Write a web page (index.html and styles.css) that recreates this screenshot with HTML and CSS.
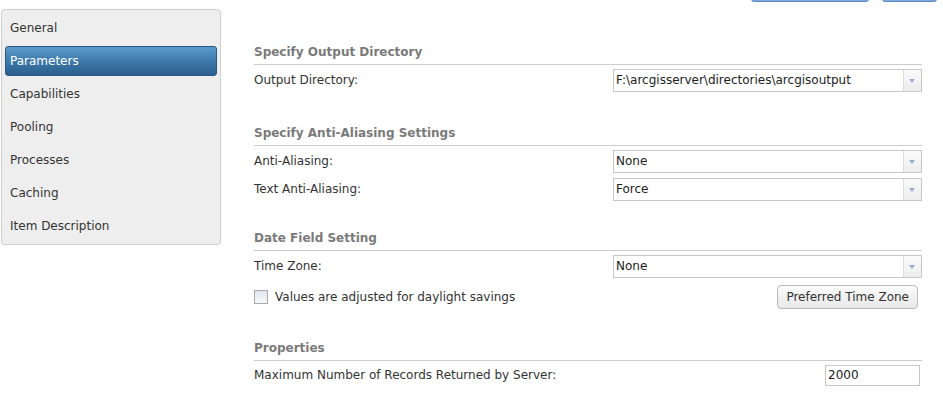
FILE: index.html
```html
<!DOCTYPE html>
<html lang="en">

<head>
  <meta charset="UTF-8" />
  <meta name="viewport" content="width=device-width, initial-scale=1.0" />
  <title>Service Parameters</title>
  <link rel="stylesheet" href="styles.css">
</head>

<body>
  <div class="toolbar">
    <button class="tool-btn wide" aria-label="Save and Restart"></button>
    <button class="tool-btn" aria-label="Cancel"></button>
  </div>

  <div class="page">
    <ul class="side-nav">
      <li>General</li>
      <li class="active">Parameters</li>
      <li>Capabilities</li>
      <li>Pooling</li>
      <li>Processes</li>
      <li>Caching</li>
      <li>Item Description</li>
    </ul>

    <div class="content">
      <div class="section first">
        <h3>Specify Output Directory</h3>
        <div class="row">
          <label>Output Directory:</label>
          <div class="select"><span>F:\arcgisserver\directories\arcgisoutput</span><i class="arrow"></i></div>
        </div>
      </div>

      <div class="section second">
        <h3>Specify Anti-Aliasing Settings</h3>
        <div class="row">
          <label>Anti-Aliasing:</label>
          <div class="select"><span>None</span><i class="arrow"></i></div>
        </div>
        <div class="row">
          <label>Text Anti-Aliasing:</label>
          <div class="select"><span>Force</span><i class="arrow"></i></div>
        </div>
      </div>

      <div class="section">
        <h3>Date Field Setting</h3>
        <div class="row">
          <label>Time Zone:</label>
          <div class="select"><span>None</span><i class="arrow"></i></div>
        </div>
        <div class="row tall">
          <label class="check"><span class="box"></span>Values are adjusted for daylight savings</label>
          <button class="btn">Preferred Time Zone</button>
        </div>
      </div>

      <div class="section">
        <h3>Properties</h3>
        <div class="row short">
          <label>Maximum Number of Records Returned by Server:</label>
          <input class="num" type="text" value="2000" />
        </div>
      </div>
    </div>
  </div>
</body>

</html>
```

FILE: styles.css
```css
* {
  box-sizing: border-box;
}

body {
  margin: 0;
  font-family: "DejaVu Sans", Verdana, sans-serif;
  font-size: 12px;
  color: #333;
  background: #fff;
}

.toolbar {
  height: 2px;
  overflow: hidden;
  display: flex;
  justify-content: flex-end;
  align-items: flex-end;
  gap: 13px;
  padding-right: 6px;
}

.tool-btn {
  flex: none;
  width: 55px;
  height: 26px;
  border: 1px solid #5a8bc4;
  border-radius: 3px;
  background: #7ea9d8;
}

.tool-btn.wide {
  width: 118px;
}

.page {
  display: flex;
  align-items: flex-start;
  margin-top: 7px;
}

.side-nav {
  width: 220px;
  margin: 0 0 0 1px;
  padding: 3px;
  list-style: none;
  display: flex;
  flex-direction: column;
  gap: 3px;
  background: #eeeeee;
  border: 1px solid #cfcfcf;
  border-radius: 4px;
}

.side-nav li {
  height: 30px;
  line-height: 30px;
  padding-left: 5px;
  color: #333;
  border-radius: 3px;
  cursor: pointer;
}

.side-nav li.active {
  color: #fff;
  background: linear-gradient(#5b9bcb, #3a77a8 55%, #2b5e8c);
  border: 1px solid #2a5882;
  line-height: 28px;
  padding-left: 4px;
}

.content {
  width: 668px;
  margin-left: 33px;
  padding-top: 35px;
}

.section {
  margin-bottom: 26px;
}

.section.first {
  margin-bottom: 31px;
}

.section.second {
  margin-bottom: 27px;
}

.section h3 {
  margin: 0 0 1px 0;
  font-size: 12px;
  line-height: 16px;
  font-weight: bold;
  color: #7a7a7a;
  padding-bottom: 4px;
  border-bottom: 1px solid #cccccc;
}

.row {
  height: 28px;
  display: flex;
  align-items: center;
  justify-content: space-between;
}

.row.tall {
  height: 34px;
}

.row.short {
  height: 26px;
}

.select {
  width: 309px;
  height: 23px;
  border: 1px solid #c8c8c8;
  display: flex;
  align-items: center;
  background: #fff;
}

.select span {
  flex: 1;
  padding-left: 2px;
  color: #222;
}

.select .arrow {
  width: 18px;
  height: 100%;
  border-left: 1px solid #dcdcdc;
  background: linear-gradient(#fafafa, #ededed);
  position: relative;
}

.select .arrow::after {
  content: "";
  position: absolute;
  left: 5px;
  top: 9px;
  border-left: 3.5px solid transparent;
  border-right: 3.5px solid transparent;
  border-top: 4px solid #9badc8;
}

.check {
  display: flex;
  align-items: center;
  gap: 7px;
}

.check .box {
  width: 14px;
  height: 14px;
  border: 1px solid #a9a9a9;
  background: linear-gradient(#dfe6ee, #f6f8fa);
}

.btn {
  height: 24px;
  margin-right: 4px;
  padding: 0 8px;
  font-family: inherit;
  font-size: 12px;
  color: #333;
  border: 1px solid #bbbbbb;
  border-radius: 4px;
  background: linear-gradient(#fbfbfb, #e8e8e8);
}

.num {
  width: 95px;
  height: 21px;
  margin-right: 2px;
  padding: 0 2px;
  font-family: inherit;
  font-size: 12px;
  color: #222;
  border: 1px solid #c8c8c8;
}
```
